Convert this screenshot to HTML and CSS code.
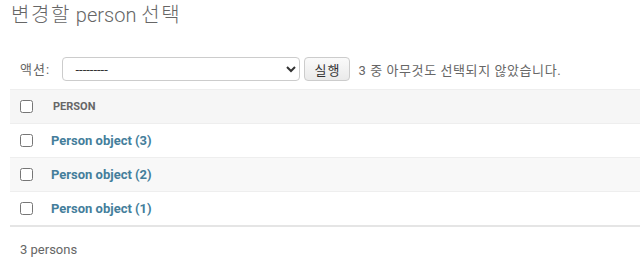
FILE: index.html
```html
<!DOCTYPE html>
<html lang="ko">
<head>
    <meta charset="UTF-8">
    <title>변경할 person 선택</title>
    <link rel="stylesheet" href="styles.css">
</head>
<body>

<div class="content">
    <h1><span class="ko">변경할</span> person <span class="ko">선택</span></h1>

    <div class="changelist">
        <!-- 액션 바 -->
        <div class="actions">
            <label class="action-label ko">액션:
                <select class="action-select">
                    <option>---------</option>
                </select>
            </label>
            <button class="button ko">실행</button>
            <span class="action-counter">3 중 아무것도 선택되지 않았습니다.</span>
        </div>

        <table class="result-list">
            <thead>
                <tr>
                    <th class="check"><input type="checkbox"></th>
                    <th class="col">Person</th>
                </tr>
            </thead>
            <tbody>
                <tr class="row1">
                    <td class="check"><input type="checkbox"></td>
                    <th class="field"><a href="#">Person object (3)</a></th>
                </tr>
                <tr class="row2">
                    <td class="check"><input type="checkbox"></td>
                    <th class="field"><a href="#">Person object (2)</a></th>
                </tr>
                <tr class="row1">
                    <td class="check"><input type="checkbox"></td>
                    <th class="field"><a href="#">Person object (1)</a></th>
                </tr>
            </tbody>
        </table>

        <p class="paginator">3 persons</p>
    </div>
</div>

</body>
</html>
```

FILE: styles.css
```css
body {
    margin: 0;
    font-family: Roboto, "Noto Sans CJK KR", sans-serif;
    font-size: 13px;
    color: #333;
    background-color: #fff;
}

/* Hangul glyphs run a little wider in the original */
.ko {
    letter-spacing: 0.08em;
}

.content {
    padding: 0 0 0 10px;
}

h1 {
    margin: 0;
    padding-top: 3px;
    padding-left: 1px;
    font-size: 20px;
    line-height: 24px;
    font-weight: 300;
    color: #666;
}

/* Action bar */
.actions {
    display: flex;
    align-items: center;
    height: 24px;
    margin-top: 30px;
    padding-left: 10px;
}

.action-label {
    color: #666;
    font-size: 13px;
}

.action-select {
    width: 238px;
    height: 24px;
    margin-left: 8px;
    padding: 0 6px 0 8px;
    border: 1px solid #ccc;
    border-radius: 4px;
    background-color: #fff;
    font-family: Roboto, sans-serif;
    font-size: 13px;
    letter-spacing: 0;
    color: #333;
}

.button {
    height: 24px;
    margin-left: 4px;
    padding: 0 9px;
    border: 1px solid #ccc;
    border-radius: 4px;
    background: linear-gradient(#fafafa, #eaeaea);
    font-family: Roboto, "Noto Sans CJK KR", sans-serif;
    font-size: 13px;
    color: #333;
}

.action-counter {
    margin-left: 8px;
    color: #666;
    letter-spacing: 0.045em;
}

/* Result table */
.result-list {
    width: 100%;
    margin-top: 8px;
    border-collapse: collapse;
    border-top: 1px solid #eee;
}

.result-list thead tr {
    background-color: #f6f6f6;
}

.result-list th,
.result-list td {
    height: 33px;
    padding: 0;
    text-align: left;
    vertical-align: middle;
    border-bottom: 1px solid #eee;
}

.result-list tbody tr:last-child th,
.result-list tbody tr:last-child td {
    border-bottom: 2px solid #e5e5e5;
}

.result-list .check {
    width: 41px;
}

.result-list input[type="checkbox"] {
    margin: 0 0 1px 10px;
    width: 13px;
    height: 13px;
    vertical-align: middle;
}

.col {
    font-size: 11px;
    font-weight: 700;
    text-transform: uppercase;
    color: #666;
    padding-left: 2px !important;
}

.row1 {
    background-color: #fff;
}

.row2 {
    background-color: #f8f8f8;
}

.field a {
    font-size: 13px;
    font-weight: 700;
    color: #447e9b;
    text-decoration: none;
}

.paginator {
    margin: 0;
    padding: 15px 0 0 10px;
    color: #666;
    font-size: 13px;
    line-height: 16px;
}
```
